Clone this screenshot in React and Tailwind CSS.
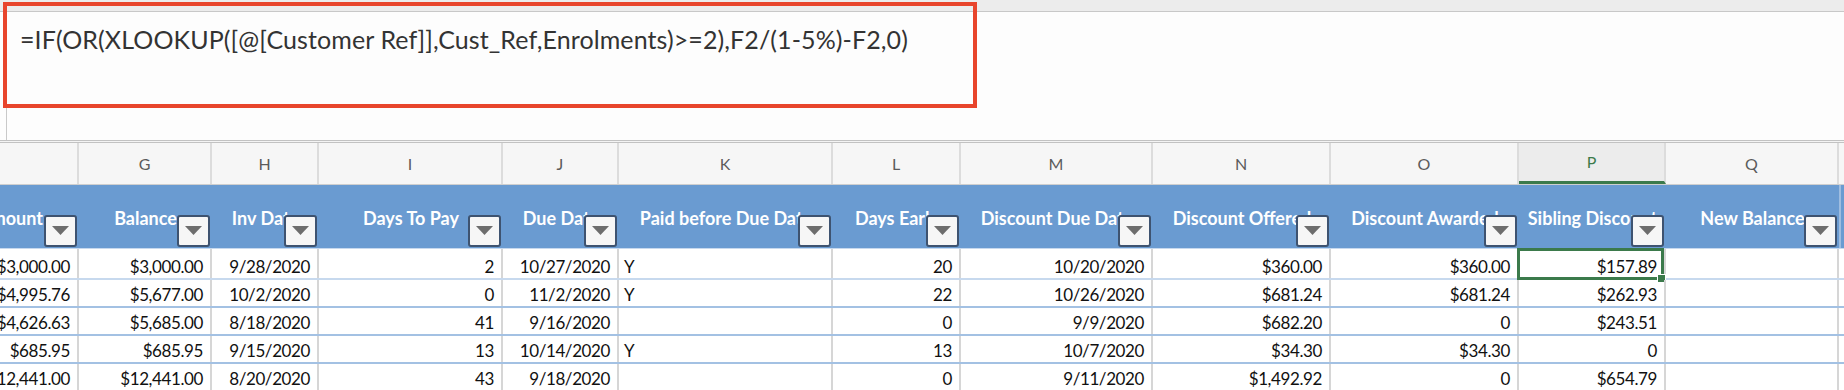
import React from "react";

const cols = [
  { k: "F", w: "w-[79px]", h: "Amount", align: "right" },
  { k: "G", w: "w-[133px]", h: "Balance", align: "right" },
  { k: "H", w: "w-[107px]", h: "Inv Date", align: "right" },
  { k: "I", w: "w-[184px]", h: "Days To Pay", align: "right" },
  { k: "J", w: "w-[116px]", h: "Due Date", align: "right" },
  { k: "K", w: "w-[214px]", h: "Paid before Due Date", align: "left" },
  { k: "L", w: "w-[128px]", h: "Days Early", align: "right" },
  { k: "M", w: "w-[192px]", h: "Discount Due Date", align: "right" },
  { k: "N", w: "w-[178px]", h: "Discount Offered", align: "right" },
  { k: "O", w: "w-[188px]", h: "Discount Awarded", align: "right" },
  { k: "P", w: "w-[147px]", h: "Sibling Discount", align: "right" },
  { k: "Q", w: "w-[173px]", h: "New Balance", align: "right" },
];

const rows = [
  ["$3,000.00", "$3,000.00", "9/28/2020", "2", "10/27/2020", "Y", "20", "10/20/2020", "$360.00", "$360.00", "$157.89", ""],
  ["$4,995.76", "$5,677.00", "10/2/2020", "0", "11/2/2020", "Y", "22", "10/26/2020", "$681.24", "$681.24", "$262.93", ""],
  ["$4,626.63", "$5,685.00", "8/18/2020", "41", "9/16/2020", "", "0", "9/9/2020", "$682.20", "0", "$243.51", ""],
  ["$685.95", "$685.95", "9/15/2020", "13", "10/14/2020", "Y", "13", "10/7/2020", "$34.30", "$34.30", "0", ""],
  ["$12,441.00", "$12,441.00", "8/20/2020", "43", "9/18/2020", "", "0", "9/11/2020", "$1,492.92", "0", "$654.79", ""],
];

function Dropdown() {
  return (
    <div className="absolute right-[2px] bottom-[1px] w-[33px] h-[32px] rounded-[3px] border-2 border-[#3e5370] bg-[#f6f6f6] flex items-center justify-center">
      <svg width="17" height="10" viewBox="0 0 17 10">
        <polygon points="0,0 17,0 8.5,9" fill="#6d6d6d" />
      </svg>
    </div>
  );
}

export default function App() {
  const font = { fontFamily: "Lato, 'Open Sans', sans-serif" };
  return (
    <div className="relative w-[1844px] h-[390px] overflow-hidden bg-white" style={font}>
      {/* top strip */}
      <div className="h-[12px] bg-[#ececec] border-b border-[#c8c8c8]" />
      {/* formula bar */}
      <div className="h-[128px] bg-[#fdfdfd] flex">
        <div className="w-[7px] border-r border-[#c9c9c9]" />
        <div className="pl-[13px] pt-[13px] text-[25px] leading-[28px] text-[#333333] tracking-[0.1px] whitespace-nowrap">
          =IF(OR(XLOOKUP([@[Customer Ref]],Cust_Ref,Enrolments)&gt;=2),F2/(1-5%)-F2,0)
        </div>
      </div>
      {/* separator double line */}
      <div className="h-[3px] border-t border-b border-[#c2c2c2] bg-[#f4f4f4]" />
      {/* column letters */}
      <div className="flex h-[42px] bg-[#f6f6f6] border-b border-[#cfcfcf]">
        {cols.map((c) => (
          <div
            key={c.k}
            className={`${c.w} shrink-0 border-r-2 border-[#dcdcdc] flex items-center justify-center text-[16px] ${
              c.k === "P" ? "bg-[#ececec] text-[#3c7a4b] border-b-[3px] border-b-[#3b7a4b]" : "text-[#5b5b5b]"
            }`}
          >
            {c.k === "F" ? "" : c.k}
          </div>
        ))}
        <div className="flex-1" />
      </div>
      {/* blue header */}
      <div className="flex h-[63px] bg-[#6a9bd1]">
        {cols.map((c) => (
          <div key={c.k} className={`${c.w} shrink-0 relative overflow-hidden`}>
            <div
              className={`absolute top-[22px] whitespace-nowrap text-[18px] leading-[22px] font-bold text-white ${
                c.k === "F" ? "right-[36px]" : "left-0 right-0 flex justify-center"
              }`}
            >
              <span className="whitespace-nowrap">{c.h}</span>
            </div>
            <Dropdown />
          </div>
        ))}
        <div className="flex-1 border-l-2 border-[#9fbde0]" />
      </div>
      {/* data rows */}
      {rows.map((r, ri) => (
        <div
          key={ri}
          className={`flex ${ri === 0 ? "h-[32px] border-t border-[#c7d9ee]" : "h-[28px]"} border-b-2 border-[#a3c1e3] bg-white`}
        >
          {cols.map((c, ci) => (
            <div
              key={c.k}
              className={`${c.w} shrink-0 relative border-r-2 border-[#d6d6d6] flex items-end pb-[1px] text-[17px] leading-[20px] tracking-[-0.4px] text-[#111111] ${
                c.align === "right" ? "justify-end pr-[7px]" : "justify-start pl-[5px]"
              }`}
            >
              <span className="whitespace-nowrap">{r[ci]}</span>
              {ri === 0 && c.k === "P" && (
                <>
                  <div className="absolute -top-[1px] -bottom-[2px] -left-[2px] right-0 border-[3px] border-[#3b7a4b]" />
                  <div className="absolute -right-[2px] -bottom-[5px] w-[9px] h-[9px] bg-[#3b7a4b] border border-white" />
                </>
              )}
            </div>
          ))}
          <div className="flex-1" />
        </div>
      ))}
      {/* red annotation box */}
      <div className="absolute left-[3px] top-[2px] w-[974px] h-[106px] border-[4px] border-[#e8452c]" />
    </div>
  );
}
